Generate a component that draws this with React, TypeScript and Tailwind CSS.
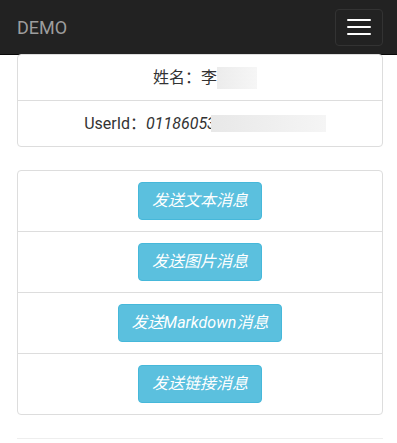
import React from 'react';

const font = { fontFamily: 'Roboto, "Noto Sans CJK SC", sans-serif' };

function SendButton({ label }: { label: string }) {
  return (
    <button className="h-[38px] px-[13px] rounded-[4px] border border-[#46b8da] bg-[#5bc0de] text-white italic text-[16px] leading-[22px]">
      {label}
    </button>
  );
}

export default function App() {
  const buttons = ['发送文本消息', '发送图片消息', '发送Markdown消息', '发送链接消息'];
  return (
    <div style={font} className="w-[397px] h-[443px] bg-white overflow-hidden text-[#333]">
      <nav className="h-[55px] bg-[#222] border-b border-[#080808] flex items-center justify-between pl-[17px] pr-[14px]">
        <span className="text-[18px] text-[#9d9d9d]">DEMO</span>
        <button className="w-[48px] h-[37px] border border-[#333] rounded-[4px] flex flex-col items-center justify-center gap-[5px]">
          <span className="block w-[24px] h-[2px] bg-white rounded-[1px]" />
          <span className="block w-[24px] h-[2px] bg-white rounded-[1px]" />
          <span className="block w-[24px] h-[2px] bg-white rounded-[1px]" />
        </button>
      </nav>
      <div className="pl-[17px] pr-[14px]">
        <div className="-mt-px border border-[#ddd] rounded-[4px] text-[16px]">
          <div className="h-[46px] pl-[10px] flex items-center justify-center border-b border-[#ddd]">
            <span>姓名：李</span>
            <span className="inline-block w-[40px] h-[22px] bg-gradient-to-r from-[#ececec] to-[#f6f6f6]" />
          </div>
          <div className="h-[45px] pl-[10px] flex items-center justify-center">
            <span>UserId：</span>
            <span className="italic">01186053</span>
            <span className="inline-block -ml-[5px] w-[115px] h-[17px] bg-gradient-to-r from-[#e8e8e8] to-[#f5f5f5]" />
          </div>
        </div>
        <div className="mt-[23px] border border-[#ddd] rounded-[4px]">
          {buttons.map((b, i) => (
            <div
              key={b}
              className={
                i < buttons.length - 1
                  ? 'h-[61px] flex items-center justify-center border-b border-[#ddd]'
                  : 'h-[60px] flex items-center justify-center'
              }
            >
              <SendButton label={b} />
            </div>
          ))}
        </div>
        <div className="mt-[23px] border-t border-[#eee]" />
      </div>
    </div>
  );
}
